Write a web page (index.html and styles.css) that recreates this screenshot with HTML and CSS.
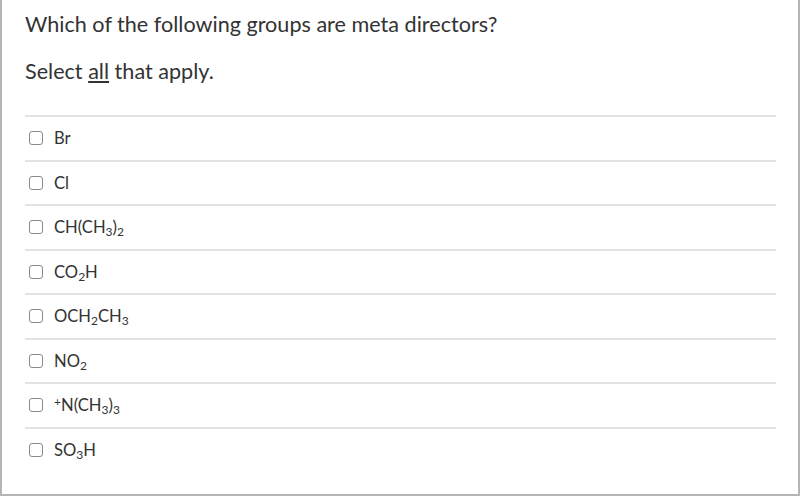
FILE: index.html
```html
<!DOCTYPE html>
<html lang="en">
<head>
  <meta charset="UTF-8">
  <title>Meta directors</title>
  <link rel="stylesheet" href="styles.css">
</head>
<body>
  <div class="question">
    <p class="prompt">Which of the following groups are meta directors?</p>
    <p class="prompt hint">Select <u>all</u> that apply.</p>

    <ul class="choices">
      <li><span class="box"></span><span class="label">Br</span></li>
      <li><span class="box"></span><span class="label">Cl</span></li>
      <li><span class="box"></span><span class="label">CH(CH<sub>3</sub>)<sub>2</sub></span></li>
      <li><span class="box"></span><span class="label">CO<sub>2</sub>H</span></li>
      <li><span class="box"></span><span class="label">OCH<sub>2</sub>CH<sub>3</sub></span></li>
      <li><span class="box"></span><span class="label">NO<sub>2</sub></span></li>
      <li><span class="box"></span><span class="label"><sup>+</sup>N(CH<sub>3</sub>)<sub>3</sub></span></li>
      <li><span class="box"></span><span class="label">SO<sub>3</sub>H</span></li>
    </ul>
  </div>
</body>
</html>
```

FILE: styles.css
```css
body {
  margin: 0;
  font-family: Lato, "Open Sans", sans-serif;
  color: #333333;
  background: #ffffff;
}

.question {
  box-sizing: border-box;
  width: 800px;
  height: 496px;
  border: 2px solid #b5b5b5;
  border-top: none;
  padding: 9px 22px 0 23px;
}

.prompt {
  margin: 0;
  font-size: 21.6px;
  line-height: 30px;
}

.hint {
  margin-top: 17px;
}

.choices {
  list-style: none;
  margin: 29px 0 0;
  padding: 0;
}

.choices li {
  display: flex;
  align-items: center;
  height: 42.5px;
  border-top: 2px solid #e3e3e3;
  padding-left: 4px;
}

.box {
  box-sizing: border-box;
  width: 14px;
  height: 14px;
  border: 1px solid #8a8a8a;
  border-radius: 3px;
  margin-right: 11px;
}

.label {
  font-size: 16.6px;
  line-height: 20px;
}

sub, sup {
  font-size: 12px;
  line-height: 0;
}

sub {
  vertical-align: -3px;
}

sup {
  vertical-align: 5px;
}
```
